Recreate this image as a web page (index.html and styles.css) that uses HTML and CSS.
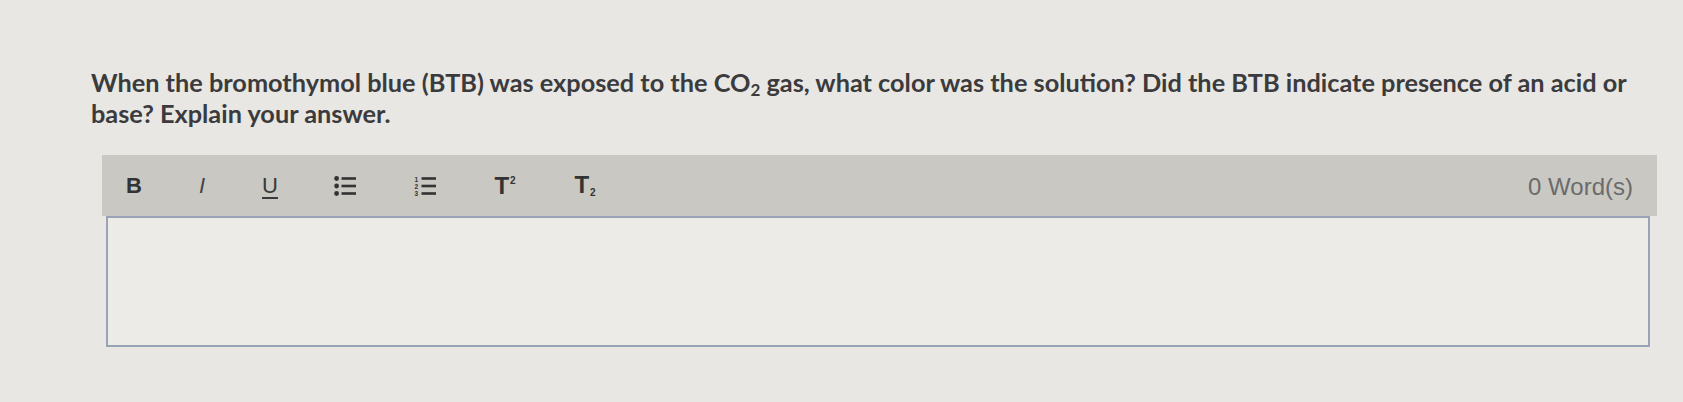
FILE: index.html
```html
<!DOCTYPE html>
<html lang="en">
<head>
<meta charset="utf-8">
<title>Question</title>
<link rel="stylesheet" href="styles.css">
</head>
<body>
<main class="page">
  <p class="question"><span class="seg">When the bromothymol blue (BTB) was exposed to the CO</span><sub class="chem">2</sub><span class="seg"> gas, what color was the solution? Did the BTB indicate presence of an acid or</span><br><span class="seg">base? Explain your answer.</span></p>
  <section class="editor">
    <div class="toolbar">
      <span class="tool tool-bold">B</span>
      <span class="tool tool-italic">I</span>
      <span class="tool tool-under">U</span>
      <span class="tool tool-list">
        <svg width="22" height="20" viewBox="0 0 22 20" aria-hidden="true">
          <circle cx="2.6" cy="2.5" r="2.4" fill="#333"/>
          <circle cx="2.6" cy="10" r="2.4" fill="#333"/>
          <circle cx="2.6" cy="17.5" r="2.4" fill="#333"/>
          <rect x="7.5" y="1.2" width="14.5" height="2.6" fill="#333"/>
          <rect x="7.5" y="8.7" width="14.5" height="2.6" fill="#333"/>
          <rect x="7.5" y="16.2" width="14.5" height="2.6" fill="#333"/>
        </svg>
      </span>
      <span class="tool tool-wide">
        <svg width="22" height="20" viewBox="0 0 22 20" aria-hidden="true">
          <text x="0.5" y="5.5" class="num">1</text>
          <text x="0.5" y="12.5" class="num">2</text>
          <text x="0.5" y="19.5" class="num">3</text>
          <rect x="7.5" y="1.2" width="14.5" height="2.6" fill="#333"/>
          <rect x="7.5" y="8.7" width="14.5" height="2.6" fill="#333"/>
          <rect x="7.5" y="16.2" width="14.5" height="2.6" fill="#333"/>
        </svg>
      </span>
      <span class="tool tool-wide tool-t"><span class="tee">T<sup class="mini sup">2</sup></span></span>
      <span class="tool tool-wide tool-t"><span class="tee">T<sub class="mini subs">2</sub></span></span>
      <span class="count">0 Word(s)</span>
    </div>
    <div class="area"></div>
  </section>
</main>
</body>
</html>
```

FILE: styles.css
```css
html, body {
  margin: 0;
  padding: 0;
}
body {
  background: #e8e7e3;
  width: 1683px;
  height: 402px;
  overflow: hidden;
}
.page {
  padding-left: 91px;
  padding-top: 67px;
}
.question {
  margin: 0;
  width: 1560px;
  font-family: Lato, "Open Sans", sans-serif;
  font-weight: 700;
  font-size: 25.3px;
  line-height: 30px;
  color: #3b3b3d;
  white-space: nowrap;
}
.chem {
  font-size: 17px;
  line-height: 1;
  vertical-align: -4px;
}
.editor {
  margin-top: 27px;
  margin-left: 11px;
  width: 1555px;
}
.toolbar {
  height: 61px;
  background: #c9c8c3;
  display: flex;
  align-items: center;
  gap: 38px;
  padding-left: 17px;
  padding-right: 24px;
  box-sizing: border-box;
}
.tool {
  width: 30px;
  display: flex;
  justify-content: center;
  align-items: center;
  font-family: "Liberation Sans", Arial, sans-serif;
  font-size: 22px;
  line-height: 24px;
  color: #333;
}
.tool-bold {
  font-weight: 700;
}
.tool-italic {
  font-style: italic;
  font-weight: 400;
  color: #444;
}
.tool-under {
  text-decoration: underline;
  text-underline-offset: 4px;
  text-decoration-thickness: 1.5px;
  color: #3a3a3a;
}
.tool-list {
  margin-left: 7px;
}
.tool-wide {
  margin-left: 12px;
}
.num {
  font-family: "Liberation Sans", Arial, sans-serif;
  font-size: 6.5px;
  font-weight: 700;
  fill: #333;
}
.tee {
  display: inline-block;
  font-weight: 700;
  font-size: 24px;
  line-height: 24px;
  white-space: nowrap;
}
.mini {
  font-size: 10px;
  line-height: 1;
  font-weight: 700;
  margin-left: 1px;
}
.sup {
  vertical-align: 10px;
}
.subs {
  vertical-align: -3px;
}
.count {
  margin-left: auto;
  font-family: "Liberation Sans", Arial, sans-serif;
  font-size: 24px;
  color: #6b6b6b;
  padding-top: 2px;
}
.area {
  margin: 0 7px 0 4px;
  height: 127px;
  background: #ecebe7;
  border: 2px solid #9aa3b5;
}
```
